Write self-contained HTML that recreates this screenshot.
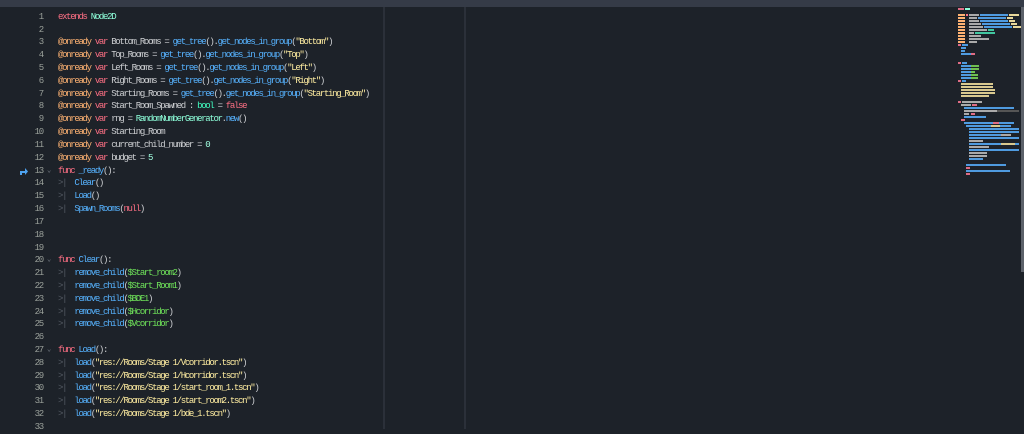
<!DOCTYPE html>
<html><head><meta charset="utf-8"><style>
*{margin:0;padding:0;box-sizing:border-box}
body{width:1024px;height:429px;overflow:hidden;background:#1d2229;position:relative;font-family:"Liberation Mono","DejaVu Sans Mono",monospace}
.top{position:absolute;left:0;top:0;width:1024px;height:7px;background:#353b47}
.vl{position:absolute;top:7px;width:2px;height:422px;background:#2b3039}
.ln{position:absolute;left:0;width:43px;text-align:right;font-size:9px;letter-spacing:-1.2px;color:#9aa09a;height:13px;line-height:13px}
.cd{position:absolute;left:58px;font-size:9px;letter-spacing:-1.31px;color:#cdcfd2;white-space:pre;height:13px;line-height:13px}
.k{color:#ff7085}.a{color:#ffb373}.f{color:#57b3ff}.s{color:#ffeda1}.t{color:#42ffc2}.n{color:#a1ffe0}.c{color:#8effda}.i{color:#555b64}.g{color:#6fe35a}
.fold{position:absolute;left:47px;font-size:7px;color:#7a7f88}
.mm{position:absolute;left:957px;top:7px;width:64px;height:422px}
.mm div{position:absolute;height:2px}
.sb{position:absolute;left:1021px;top:7px;width:3px;height:265px;background:#5c616a}
</style></head><body>
<div class="top"></div>
<div class="vl" style="left:383px"></div>
<div class="vl" style="left:464px"></div>

<div class="ln" style="top:11px">1</div><div class="cd" style="top:11px"><span class="k">extends</span> <span class="c">Node2D</span></div>
<div class="ln" style="top:24px">2</div>
<div class="ln" style="top:36px">3</div><div class="cd" style="top:36px"><span class="a">@onready</span> <span class="k">var</span> Bottom_Rooms = <span class="f">get_tree</span>().<span class="f">get_nodes_in_group</span>(<span class="s">"Bottom"</span>)</div>
<div class="ln" style="top:49px">4</div><div class="cd" style="top:49px"><span class="a">@onready</span> <span class="k">var</span> Top_Rooms = <span class="f">get_tree</span>().<span class="f">get_nodes_in_group</span>(<span class="s">"Top"</span>)</div>
<div class="ln" style="top:62px">5</div><div class="cd" style="top:62px"><span class="a">@onready</span> <span class="k">var</span> Left_Rooms = <span class="f">get_tree</span>().<span class="f">get_nodes_in_group</span>(<span class="s">"Left"</span>)</div>
<div class="ln" style="top:75px">6</div><div class="cd" style="top:75px"><span class="a">@onready</span> <span class="k">var</span> Right_Rooms = <span class="f">get_tree</span>().<span class="f">get_nodes_in_group</span>(<span class="s">"Right"</span>)</div>
<div class="ln" style="top:88px">7</div><div class="cd" style="top:88px"><span class="a">@onready</span> <span class="k">var</span> Starting_Rooms = <span class="f">get_tree</span>().<span class="f">get_nodes_in_group</span>(<span class="s">"Starting_Room"</span>)</div>
<div class="ln" style="top:100px">8</div><div class="cd" style="top:100px"><span class="a">@onready</span> <span class="k">var</span> Start_Room_Spawned : <span class="t">bool</span> = <span class="k">false</span></div>
<div class="ln" style="top:113px">9</div><div class="cd" style="top:113px"><span class="a">@onready</span> <span class="k">var</span> rng = <span class="c">RandomNumberGenerator</span>.<span class="f">new</span>()</div>
<div class="ln" style="top:126px">10</div><div class="cd" style="top:126px"><span class="a">@onready</span> <span class="k">var</span> Starting_Room</div>
<div class="ln" style="top:139px">11</div><div class="cd" style="top:139px"><span class="a">@onready</span> <span class="k">var</span> current_child_number = <span class="n">0</span></div>
<div class="ln" style="top:152px">12</div><div class="cd" style="top:152px"><span class="a">@onready</span> <span class="k">var</span> budget = <span class="n">5</span></div>
<svg style="position:absolute;left:19px;top:166px" width="10" height="10" viewBox="0 0 10 10"><path d="M1 9 L1 5 L6 5 L6 2 L9 5.5 L6 9 L6 7 L3 7 L3 9 Z" fill="#4ea3f0"/></svg>
<div class="ln" style="top:165px">13</div><div class="fold" style="top:166px">⌄</div><div class="cd" style="top:165px"><span class="k">func</span> <span class="f">_ready</span>():</div>
<div class="ln" style="top:177px">14</div><div class="cd" style="top:177px"><span class="i">&gt;|</span>  <span class="f">Clear</span>()</div>
<div class="ln" style="top:190px">15</div><div class="cd" style="top:190px"><span class="i">&gt;|</span>  <span class="f">Load</span>()</div>
<div class="ln" style="top:203px">16</div><div class="cd" style="top:203px"><span class="i">&gt;|</span>  <span class="f">Spawn_Rooms</span>(<span class="k">null</span>)</div>
<div class="ln" style="top:216px">17</div>
<div class="ln" style="top:229px">18</div>
<div class="ln" style="top:242px">19</div>
<div class="ln" style="top:254px">20</div><div class="fold" style="top:255px">⌄</div><div class="cd" style="top:254px"><span class="k">func</span> <span class="f">Clear</span>():</div>
<div class="ln" style="top:267px">21</div><div class="cd" style="top:267px"><span class="i">&gt;|</span>  <span class="f">remove_child</span>(<span class="g">$Start_room2</span>)</div>
<div class="ln" style="top:280px">22</div><div class="cd" style="top:280px"><span class="i">&gt;|</span>  <span class="f">remove_child</span>(<span class="g">$Start_Room1</span>)</div>
<div class="ln" style="top:293px">23</div><div class="cd" style="top:293px"><span class="i">&gt;|</span>  <span class="f">remove_child</span>(<span class="g">$BDE1</span>)</div>
<div class="ln" style="top:306px">24</div><div class="cd" style="top:306px"><span class="i">&gt;|</span>  <span class="f">remove_child</span>(<span class="g">$Hcorridor</span>)</div>
<div class="ln" style="top:318px">25</div><div class="cd" style="top:318px"><span class="i">&gt;|</span>  <span class="f">remove_child</span>(<span class="g">$Vcorridor</span>)</div>
<div class="ln" style="top:331px">26</div>
<div class="ln" style="top:344px">27</div><div class="fold" style="top:345px">⌄</div><div class="cd" style="top:344px"><span class="k">func</span> <span class="f">Load</span>():</div>
<div class="ln" style="top:357px">28</div><div class="cd" style="top:357px"><span class="i">&gt;|</span>  <span class="f">load</span>(<span class="s">"res://Rooms/Stage 1/Vcorridor.tscn"</span>)</div>
<div class="ln" style="top:370px">29</div><div class="cd" style="top:370px"><span class="i">&gt;|</span>  <span class="f">load</span>(<span class="s">"res://Rooms/Stage 1/Hcorridor.tscn"</span>)</div>
<div class="ln" style="top:382px">30</div><div class="cd" style="top:382px"><span class="i">&gt;|</span>  <span class="f">load</span>(<span class="s">"res://Rooms/Stage 1/start_room_1.tscn"</span>)</div>
<div class="ln" style="top:395px">31</div><div class="cd" style="top:395px"><span class="i">&gt;|</span>  <span class="f">load</span>(<span class="s">"res://Rooms/Stage 1/start_room2.tscn"</span>)</div>
<div class="ln" style="top:408px">32</div><div class="cd" style="top:408px"><span class="i">&gt;|</span>  <span class="f">load</span>(<span class="s">"res://Rooms/Stage 1/bde_1.tscn"</span>)</div>
<div class="ln" style="top:421px">33</div>

<div class="mm">
<div style="left:1px;top:1px;width:6px;background:#e06c85"></div><div style="left:8px;top:1px;width:5px;background:#8effda"></div>
<div style="left:1px;top:7px;width:7px;background:#ffb373"></div><div style="left:9px;top:7px;width:2px;background:#ff7085"></div><div style="left:12px;top:7px;width:10px;background:#aaa"></div><div style="left:23px;top:7px;width:28px;background:#4f9be0"></div><div style="left:52px;top:7px;width:10px;background:#e8d79a"></div>
<div style="left:1px;top:10px;width:7px;background:#ffb373"></div><div style="left:12px;top:10px;width:8px;background:#aaa"></div><div style="left:21px;top:10px;width:28px;background:#4f9be0"></div><div style="left:50px;top:10px;width:6px;background:#e8d79a"></div>
<div style="left:1px;top:13px;width:7px;background:#ffb373"></div><div style="left:12px;top:13px;width:10px;background:#aaa"></div><div style="left:23px;top:13px;width:28px;background:#4f9be0"></div><div style="left:52px;top:13px;width:6px;background:#e8d79a"></div>
<div style="left:1px;top:16px;width:7px;background:#ffb373"></div><div style="left:12px;top:16px;width:12px;background:#aaa"></div><div style="left:25px;top:16px;width:28px;background:#4f9be0"></div><div style="left:54px;top:16px;width:6px;background:#e8d79a"></div>
<div style="left:1px;top:19px;width:7px;background:#ffb373"></div><div style="left:12px;top:19px;width:14px;background:#aaa"></div><div style="left:27px;top:19px;width:28px;background:#4f9be0"></div><div style="left:56px;top:19px;width:8px;background:#e8d79a"></div>
<div style="left:1px;top:22px;width:7px;background:#ffb373"></div><div style="left:12px;top:22px;width:18px;background:#aaa"></div><div style="left:31px;top:22px;width:6px;background:#42c7a0"></div>
<div style="left:1px;top:25px;width:7px;background:#ffb373"></div><div style="left:12px;top:25px;width:5px;background:#aaa"></div><div style="left:18px;top:25px;width:20px;background:#42c7a0"></div>
<div style="left:1px;top:28px;width:7px;background:#ffb373"></div><div style="left:12px;top:28px;width:12px;background:#aaa"></div>
<div style="left:1px;top:31px;width:7px;background:#ffb373"></div><div style="left:12px;top:31px;width:20px;background:#aaa"></div>
<div style="left:1px;top:34px;width:7px;background:#ffb373"></div><div style="left:12px;top:34px;width:8px;background:#aaa"></div>
<div style="left:1px;top:37px;width:3px;background:#e06c85"></div><div style="left:5px;top:37px;width:6px;background:#4f9be0"></div>
<div style="left:4px;top:40px;width:5px;background:#4f9be0"></div><div style="left:4px;top:43px;width:4px;background:#4f9be0"></div><div style="left:4px;top:46px;width:10px;background:#4f9be0"></div><div style="left:14px;top:46px;width:4px;background:#e06c85"></div>
<div style="left:1px;top:55px;width:3px;background:#e06c85"></div><div style="left:5px;top:55px;width:5px;background:#4f9be0"></div>
<div style="left:4px;top:58px;width:10px;background:#4f9be0"></div><div style="left:14px;top:58px;width:8px;background:#6fbf50"></div>
<div style="left:4px;top:61px;width:10px;background:#4f9be0"></div><div style="left:14px;top:61px;width:8px;background:#6fbf50"></div>
<div style="left:4px;top:64px;width:10px;background:#4f9be0"></div><div style="left:14px;top:64px;width:4px;background:#6fbf50"></div>
<div style="left:4px;top:67px;width:10px;background:#4f9be0"></div><div style="left:14px;top:67px;width:7px;background:#6fbf50"></div>
<div style="left:4px;top:70px;width:10px;background:#4f9be0"></div><div style="left:14px;top:70px;width:7px;background:#6fbf50"></div>
<div style="left:1px;top:73px;width:3px;background:#e06c85"></div><div style="left:5px;top:73px;width:4px;background:#4f9be0"></div>
<div style="left:4px;top:76px;width:32px;background:#d9c98f"></div><div style="left:4px;top:79px;width:32px;background:#d9c98f"></div><div style="left:4px;top:82px;width:34px;background:#d9c98f"></div><div style="left:4px;top:85px;width:34px;background:#d9c98f"></div><div style="left:4px;top:88px;width:28px;background:#d9c98f"></div>
<div style="left:1px;top:94px;width:3px;background:#e06c85"></div><div style="left:5px;top:94px;width:20px;background:#aaa"></div>
<div style="left:4px;top:97px;width:10px;background:#aaa"></div><div style="left:15px;top:97px;width:5px;background:#e06c85"></div>
<div style="left:7px;top:100px;width:50px;background:#4f9be0"></div>
<div style="left:7px;top:103px;width:33px;background:#aaa"></div><div style="left:40px;top:103px;width:22px;background:#555"></div>
<div style="left:7px;top:106px;width:5px;background:#aaa"></div><div style="left:14px;top:106px;width:4px;background:#e06c85"></div>
<div style="left:7px;top:109px;width:22px;background:#4f9be0"></div>
<div style="left:4px;top:112px;width:4px;background:#e06c85"></div>
<div style="left:7px;top:115px;width:50px;background:#4f9be0"></div><div style="left:36px;top:115px;width:6px;background:#e06c85"></div>
<div style="left:9px;top:118px;width:45px;background:#4f9be0"></div><div style="left:34px;top:118px;width:9px;background:#d9c98f"></div>
<div style="left:12px;top:121px;width:50px;background:#4f9be0"></div>
<div style="left:12px;top:124px;width:50px;background:#4f9be0"></div>
<div style="left:12px;top:127px;width:32px;background:#4f9be0"></div><div style="left:44px;top:127px;width:10px;background:#aaa"></div>
<div style="left:12px;top:130px;width:50px;background:#4f9be0"></div>
<div style="left:12px;top:133px;width:14px;background:#aaa"></div>
<div style="left:12px;top:136px;width:50px;background:#4f9be0"></div><div style="left:44px;top:136px;width:14px;background:#d9c98f"></div>
<div style="left:12px;top:139px;width:20px;background:#aaa"></div>
<div style="left:12px;top:142px;width:50px;background:#4f9be0"></div>
<div style="left:12px;top:145px;width:18px;background:#aaa"></div>
<div style="left:12px;top:148px;width:18px;background:#aaa"></div><div style="left:12px;top:151px;width:14px;background:#4f9be0"></div>
<div style="left:9px;top:157px;width:40px;background:#4f9be0"></div><div style="left:9px;top:160px;width:4px;background:#e06c85"></div>
<div style="left:9px;top:163px;width:44px;background:#4f9be0"></div><div style="left:9px;top:166px;width:4px;background:#e06c85"></div>
</div>
<div class="sb"></div>
</body></html>
